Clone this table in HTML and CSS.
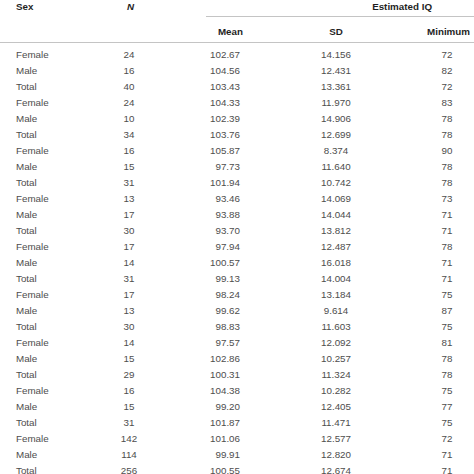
FILE: index.html
```html
<!DOCTYPE html>
<html>
<head>
<meta charset="utf-8">
<link rel="stylesheet" href="styles.css">
</head>
<body>
<table class="iq">
  <colgroup>
    <col class="c-sex"><col class="c-n"><col class="c-mean"><col class="c-sd"><col class="c-min">
  </colgroup>
  <thead>
    <tr class="top">
      <th class="sex">Sex</th>
      <th class="n"><em>N</em></th>
      <th colspan="3" class="group"><div class="group-label">Estimated IQ</div></th>
    </tr>
    <tr class="sub">
      <th></th>
      <th></th>
      <th class="mean">Mean</th>
      <th class="sd">SD</th>
      <th class="min">Minimum</th>
    </tr>
  </thead>
  <tbody>
    <tr><td class="sex">Female</td><td class="n">24</td><td class="mean">102.67</td><td class="sd">14.156</td><td class="min">72</td></tr>
    <tr><td class="sex">Male</td><td class="n">16</td><td class="mean">104.56</td><td class="sd">12.431</td><td class="min">82</td></tr>
    <tr><td class="sex">Total</td><td class="n">40</td><td class="mean">103.43</td><td class="sd">13.361</td><td class="min">72</td></tr>
    <tr><td class="sex">Female</td><td class="n">24</td><td class="mean">104.33</td><td class="sd">11.970</td><td class="min">83</td></tr>
    <tr><td class="sex">Male</td><td class="n">10</td><td class="mean">102.39</td><td class="sd">14.906</td><td class="min">78</td></tr>
    <tr><td class="sex">Total</td><td class="n">34</td><td class="mean">103.76</td><td class="sd">12.699</td><td class="min">78</td></tr>
    <tr><td class="sex">Female</td><td class="n">16</td><td class="mean">105.87</td><td class="sd">8.374</td><td class="min">90</td></tr>
    <tr><td class="sex">Male</td><td class="n">15</td><td class="mean">97.73</td><td class="sd">11.640</td><td class="min">78</td></tr>
    <tr><td class="sex">Total</td><td class="n">31</td><td class="mean">101.94</td><td class="sd">10.742</td><td class="min">78</td></tr>
    <tr><td class="sex">Female</td><td class="n">13</td><td class="mean">93.46</td><td class="sd">14.069</td><td class="min">73</td></tr>
    <tr><td class="sex">Male</td><td class="n">17</td><td class="mean">93.88</td><td class="sd">14.044</td><td class="min">71</td></tr>
    <tr><td class="sex">Total</td><td class="n">30</td><td class="mean">93.70</td><td class="sd">13.812</td><td class="min">71</td></tr>
    <tr><td class="sex">Female</td><td class="n">17</td><td class="mean">97.94</td><td class="sd">12.487</td><td class="min">78</td></tr>
    <tr><td class="sex">Male</td><td class="n">14</td><td class="mean">100.57</td><td class="sd">16.018</td><td class="min">71</td></tr>
    <tr><td class="sex">Total</td><td class="n">31</td><td class="mean">99.13</td><td class="sd">14.004</td><td class="min">71</td></tr>
    <tr><td class="sex">Female</td><td class="n">17</td><td class="mean">98.24</td><td class="sd">13.184</td><td class="min">75</td></tr>
    <tr><td class="sex">Male</td><td class="n">13</td><td class="mean">99.62</td><td class="sd">9.614</td><td class="min">87</td></tr>
    <tr><td class="sex">Total</td><td class="n">30</td><td class="mean">98.83</td><td class="sd">11.603</td><td class="min">75</td></tr>
    <tr><td class="sex">Female</td><td class="n">14</td><td class="mean">97.57</td><td class="sd">12.092</td><td class="min">81</td></tr>
    <tr><td class="sex">Male</td><td class="n">15</td><td class="mean">102.86</td><td class="sd">10.257</td><td class="min">78</td></tr>
    <tr><td class="sex">Total</td><td class="n">29</td><td class="mean">100.31</td><td class="sd">11.324</td><td class="min">78</td></tr>
    <tr><td class="sex">Female</td><td class="n">16</td><td class="mean">104.38</td><td class="sd">10.282</td><td class="min">75</td></tr>
    <tr><td class="sex">Male</td><td class="n">15</td><td class="mean">99.20</td><td class="sd">12.405</td><td class="min">77</td></tr>
    <tr><td class="sex">Total</td><td class="n">31</td><td class="mean">101.87</td><td class="sd">11.471</td><td class="min">75</td></tr>
    <tr><td class="sex">Female</td><td class="n">142</td><td class="mean">101.06</td><td class="sd">12.577</td><td class="min">72</td></tr>
    <tr><td class="sex">Male</td><td class="n">114</td><td class="mean">99.91</td><td class="sd">12.820</td><td class="min">71</td></tr>
    <tr><td class="sex">Total</td><td class="n">256</td><td class="mean">100.55</td><td class="sd">12.674</td><td class="min">71</td></tr>
  </tbody>
</table>
</body>
</html>
```

FILE: styles.css
```css
html, body {
  margin: 0;
  padding: 0;
  background: #ffffff;
}

body {
  font-family: "Liberation Sans", Arial, sans-serif;
  font-size: 9.8px;
  color: #4d4d4d;
  overflow: hidden;
}

.iq {
  width: 474px;
  border-collapse: collapse;
  table-layout: fixed;
}

.c-sex { width: 100px; }
.c-n { width: 58px; }
.c-mean { width: 88px; }
.c-sd { width: 180px; }
.c-min { width: 48px; }

.iq th,
.iq td {
  padding: 0;
  white-space: nowrap;
}

.iq th {
  font-weight: bold;
  color: #1f1f1f;
}

.iq th em {
  font-style: italic;
}

.top th {
  vertical-align: top;
  line-height: 13px;
}

.top .sex { text-align: left; padding-left: 16px; }
.top .n { text-align: center; padding-left: 3px; }

.group-label {
  margin-left: 48px;
  padding-bottom: 3px;
  padding-right: 42px;
  border-bottom: 1px solid #c4c4c4;
  text-align: right;
}

.sub th {
  line-height: 16px;
  padding-top: 7px;
  padding-bottom: 2px;
  border-bottom: 1px solid #c4c4c4;
}

.sub .mean { text-align: right; padding-right: 3px; }
.sub .sd { text-align: center; }
.sub .min { text-align: center; padding-right: 3px; }

tbody td {
  line-height: 16px;
}

tbody tr:first-child td {
  padding-top: 4px;
}

td.sex { text-align: left; padding-left: 16px; }
td.n { text-align: center; }
td.mean { text-align: right; padding-right: 6px; }
td.sd { text-align: center; }
td.min { text-align: center; padding-right: 6px; }
```
